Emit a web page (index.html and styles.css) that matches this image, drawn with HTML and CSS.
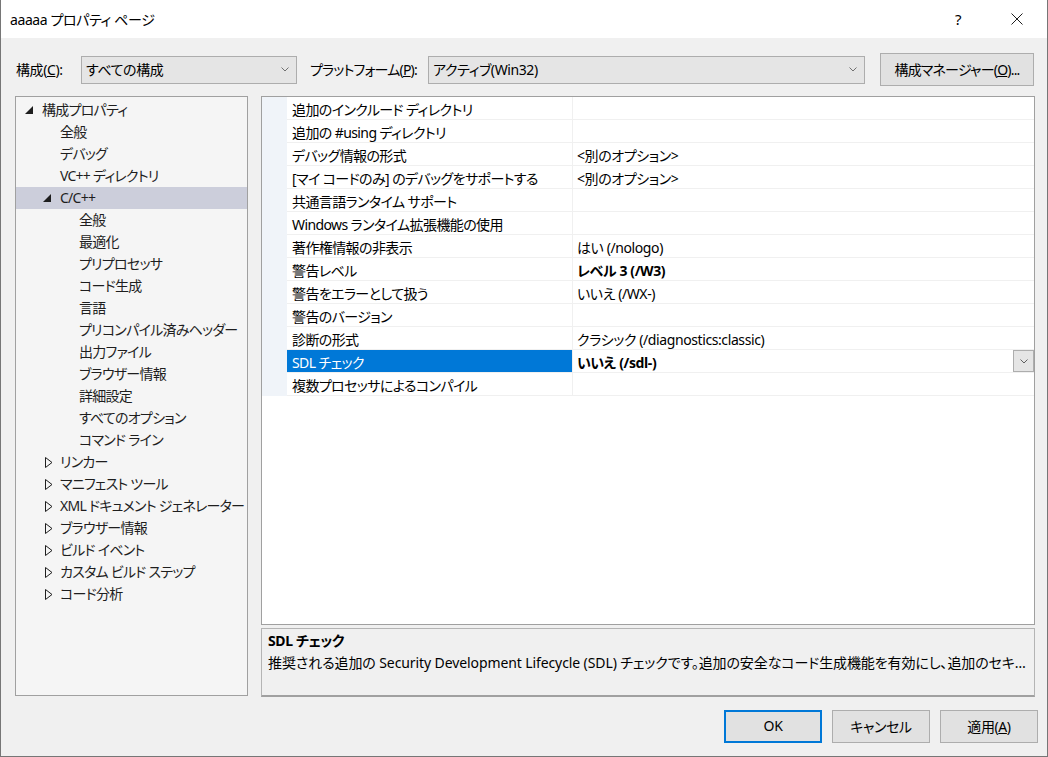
FILE: index.html
```html
<!DOCTYPE html>
<html lang="ja">
  <head>
    <meta charset="UTF-8" />
    <title>aaaaa プロパティ ページ</title>
    <link rel="stylesheet" href="styles.css">
  </head>
  <body>
    <div class="dialog">
      <div class="titlebar">
        <span class="title">aaaaa プロパティ ページ</span>
        <span class="help">?</span>
        <svg class="close" width="12" height="12" viewBox="0 0 12 12">
          <path d="M0.5 0.5 L11.5 11.5 M11.5 0.5 L0.5 11.5" stroke="#1e1e1e" stroke-width="1" fill="none" />
        </svg>
      </div>

      <div class="toolbar">
        <label class="field-label config-label">構成(<u>C</u>):</label>
        <div class="combo config-combo">
          <span>すべての構成</span>
          <svg class="chevron" width="8" height="5" viewBox="0 0 8 5"><path d="M0.5 0.5 L4 4 L7.5 0.5" stroke="#707070" fill="none" /></svg>
        </div>
        <label class="field-label platform-label">プラットフォーム(<u>P</u>):</label>
        <div class="combo platform-combo">
          <span>アクティブ(Win32)</span>
          <svg class="chevron" width="8" height="5" viewBox="0 0 8 5"><path d="M0.5 0.5 L4 4 L7.5 0.5" stroke="#707070" fill="none" /></svg>
        </div>
        <button class="btn manager-btn">構成マネージャー(<u>O</u>)...</button>
      </div>

      <div class="content">
        <ul class="tree">
          <li class="node lvl0"><span class="exp"><svg width="8" height="8" viewBox="0 0 8 8"><polygon points="8,0 8,8 0,8" fill="#1e1e1e" /></svg></span>構成プロパティ</li>
          <li class="node lvl1"><span class="exp"></span>全般</li>
          <li class="node lvl1"><span class="exp"></span>デバッグ</li>
          <li class="node lvl1"><span class="exp"></span>VC++ ディレクトリ</li>
          <li class="node lvl1 active"><span class="exp"><svg width="8" height="8" viewBox="0 0 8 8"><polygon points="8,0 8,8 0,8" fill="#1e1e1e" /></svg></span>C/C++</li>
          <li class="node lvl2"><span class="exp"></span>全般</li>
          <li class="node lvl2"><span class="exp"></span>最適化</li>
          <li class="node lvl2"><span class="exp"></span>プリプロセッサ</li>
          <li class="node lvl2"><span class="exp"></span>コード生成</li>
          <li class="node lvl2"><span class="exp"></span>言語</li>
          <li class="node lvl2"><span class="exp"></span>プリコンパイル済みヘッダー</li>
          <li class="node lvl2"><span class="exp"></span>出力ファイル</li>
          <li class="node lvl2"><span class="exp"></span>ブラウザー情報</li>
          <li class="node lvl2"><span class="exp"></span>詳細設定</li>
          <li class="node lvl2"><span class="exp"></span>すべてのオプション</li>
          <li class="node lvl2"><span class="exp"></span>コマンド ライン</li>
          <li class="node lvl1"><span class="exp collapsed"><svg width="8" height="11" viewBox="0 0 8 11"><polygon points="0.5,0.5 7,5.5 0.5,10.5" fill="none" stroke="#1e1e1e" /></svg></span>リンカー</li>
          <li class="node lvl1"><span class="exp collapsed"><svg width="8" height="11" viewBox="0 0 8 11"><polygon points="0.5,0.5 7,5.5 0.5,10.5" fill="none" stroke="#1e1e1e" /></svg></span>マニフェスト ツール</li>
          <li class="node lvl1"><span class="exp collapsed"><svg width="8" height="11" viewBox="0 0 8 11"><polygon points="0.5,0.5 7,5.5 0.5,10.5" fill="none" stroke="#1e1e1e" /></svg></span>XML ドキュメント ジェネレーター</li>
          <li class="node lvl1"><span class="exp collapsed"><svg width="8" height="11" viewBox="0 0 8 11"><polygon points="0.5,0.5 7,5.5 0.5,10.5" fill="none" stroke="#1e1e1e" /></svg></span>ブラウザー情報</li>
          <li class="node lvl1"><span class="exp collapsed"><svg width="8" height="11" viewBox="0 0 8 11"><polygon points="0.5,0.5 7,5.5 0.5,10.5" fill="none" stroke="#1e1e1e" /></svg></span>ビルド イベント</li>
          <li class="node lvl1"><span class="exp collapsed"><svg width="8" height="11" viewBox="0 0 8 11"><polygon points="0.5,0.5 7,5.5 0.5,10.5" fill="none" stroke="#1e1e1e" /></svg></span>カスタム ビルド ステップ</li>
          <li class="node lvl1"><span class="exp collapsed"><svg width="8" height="11" viewBox="0 0 8 11"><polygon points="0.5,0.5 7,5.5 0.5,10.5" fill="none" stroke="#1e1e1e" /></svg></span>コード分析</li>
        </ul>

        <div class="right-pane">
          <div class="props">
            <div class="prop-row"><div class="gutter"></div><div class="name">追加のインクルード ディレクトリ</div><div class="value"></div></div>
            <div class="prop-row"><div class="gutter"></div><div class="name">追加の #using ディレクトリ</div><div class="value"></div></div>
            <div class="prop-row"><div class="gutter"></div><div class="name">デバッグ情報の形式</div><div class="value">&lt;別のオプション&gt;</div></div>
            <div class="prop-row"><div class="gutter"></div><div class="name">[マイ コードのみ] のデバッグをサポートする</div><div class="value">&lt;別のオプション&gt;</div></div>
            <div class="prop-row"><div class="gutter"></div><div class="name">共通言語ランタイム サポート</div><div class="value"></div></div>
            <div class="prop-row"><div class="gutter"></div><div class="name">Windows ランタイム拡張機能の使用</div><div class="value"></div></div>
            <div class="prop-row"><div class="gutter"></div><div class="name">著作権情報の非表示</div><div class="value">はい (/nologo)</div></div>
            <div class="prop-row"><div class="gutter"></div><div class="name">警告レベル</div><div class="value bold">レベル 3 (/W3)</div></div>
            <div class="prop-row"><div class="gutter"></div><div class="name">警告をエラーとして扱う</div><div class="value">いいえ (/WX-)</div></div>
            <div class="prop-row"><div class="gutter"></div><div class="name">警告のバージョン</div><div class="value"></div></div>
            <div class="prop-row"><div class="gutter"></div><div class="name">診断の形式</div><div class="value">クラシック (/diagnostics:classic)</div></div>
            <div class="prop-row selected">
              <div class="gutter"></div>
              <div class="name">SDL チェック</div>
              <div class="value bold">
                <span>いいえ (/sdl-)</span>
                <span class="drop-btn"><svg width="8" height="5" viewBox="0 0 8 5"><path d="M0.5 0.5 L4 4 L7.5 0.5" stroke="#606060" fill="none" /></svg></span>
              </div>
            </div>
            <div class="prop-row"><div class="gutter"></div><div class="name">複数プロセッサによるコンパイル</div><div class="value"></div></div>
          </div>

          <div class="desc">
            <div class="desc-title">SDL チェック</div>
            <div class="desc-text">推奨される追加の Security Development Lifecycle (SDL) チェックです。追加の安全なコード生成機能を有効にし、追加のセキュリティ関連の警告をエラーとして有効にします。</div>
          </div>
        </div>
      </div>

      <div class="footer">
        <button class="btn default-btn">OK</button>
        <button class="btn">キャンセル</button>
        <button class="btn">適用(<u>A</u>)</button>
      </div>
    </div>
  </body>
</html>
```

FILE: styles.css
```css
* {
  box-sizing: border-box;
}
html,
body {
  margin: 0;
  padding: 0;
}
body {
  font-family: "Noto Sans", "Noto Sans CJK JP", sans-serif;
  font-size: 14px;
  font-feature-settings: "palt";
  letter-spacing: -0.4px;
  color: #1e1e1e;
  background: #f0f0f0;
}
.dialog {
  width: 1048px;
  height: 757px;
  background: #f0f0f0;
  border: 1px solid #767676;
  border-top: none;
  display: flex;
  flex-direction: column;
}

/* title bar */
.titlebar {
  height: 38px;
  background: #fff;
  display: flex;
  align-items: center;
  padding-left: 9px;
  color: #000;
}
.title {
  font-size: 14px;
  flex: 1;
}
.help {
  font-size: 15px;
  margin-right: 50px;
}
.close {
  margin-right: 24px;
}

/* configuration row */
.toolbar {
  display: flex;
  align-items: center;
  height: 33px;
  margin-top: 15px;
  padding-left: 15px;
  color: #000;
}
.field-label {
  white-space: nowrap;
  padding-bottom: 2px;
}
.config-label {
  width: 65px;
}
.platform-label {
  width: 118px;
  margin-left: 13px;
  letter-spacing: -0.8px;
}
.combo {
  height: 28px;
  background: #e5e5e5;
  border: 1px solid #adadad;
  display: flex;
  align-items: center;
  justify-content: space-between;
  padding: 0 7px 2px 4px;
  color: #000;
}
.combo .chevron {
  margin-top: 2px;
}
.config-combo {
  width: 216px;
}
.platform-combo {
  width: 437px;
}
.btn {
  font: inherit;
  font-feature-settings: "palt";
  letter-spacing: -0.4px;
  color: #000;
  background: #e1e1e1;
  border: 1px solid #adadad;
  height: 33px;
  padding: 0 0 2px;
}
.manager-btn {
  width: 154px;
  margin-left: 15px;
  letter-spacing: -0.8px;
}

/* main area */
.content {
  display: flex;
  margin-top: 10px;
  padding-left: 14px;
  gap: 13px;
}
.tree {
  list-style: none;
  margin: 0;
  padding: 2px 0 0;
  width: 233px;
  height: 600px;
  background: #f5f5f5;
  border: 1px solid #a0a0a0;
}
.node {
  height: 22px;
  line-height: 22px;
  display: flex;
  align-items: center;
  white-space: nowrap;
  letter-spacing: -0.75px;
}
.node.active {
  background: #cccedb;
}
.exp {
  width: 18px;
  flex: none;
  display: flex;
  align-items: center;
  padding-left: 1px;
}
.exp.collapsed {
  padding-left: 3px;
}
.lvl0 {
  padding-left: 8px;
}
.lvl1 {
  padding-left: 26px;
}
.lvl2 {
  padding-left: 45px;
}

.right-pane {
  width: 774px;
  display: flex;
  flex-direction: column;
  gap: 3px;
}
.props {
  height: 529px;
  background: #fff;
  border: 1px solid #a0a0a0;
  color: #000;
}
.prop-row {
  display: grid;
  grid-template-columns: 25px 285px 1fr;
  height: 23px;
}
.gutter {
  background: #f0f4f9;
}
.name,
.value {
  padding-top: 3px;
  line-height: 19px;
  border-bottom: 1px solid #f0f0f0;
  white-space: nowrap;
  overflow: hidden;
}
.name {
  padding-left: 5px;
  letter-spacing: -0.6px;
}
.value {
  padding-left: 4px;
  border-left: 1px solid #f0f0f0;
}
.value.bold {
  font-weight: bold;
}
.selected .name {
  background: #0078d7;
  color: #fff;
}
.selected .value {
  display: flex;
  justify-content: space-between;
  align-items: flex-start;
}
.drop-btn {
  width: 21px;
  height: 22px;
  margin-top: -3px;
  background: #e5e5e5;
  border: 1px solid #adadad;
  display: flex;
  align-items: center;
  justify-content: center;
}

.desc {
  height: 69px;
  border: 1px solid #b4b4b4;
  border-bottom: 2px solid #a0a0a0;
  background: #f0f0f0;
  padding: 2px 6px 0;
  color: #000;
}
.desc-title {
  font-weight: bold;
  line-height: 20px;
}
.desc-text {
  line-height: 23px;
  letter-spacing: -0.1px;
  white-space: nowrap;
  overflow: hidden;
  text-overflow: ellipsis;
}

/* dialog buttons */
.footer {
  display: flex;
  justify-content: flex-end;
  gap: 10px;
  margin-top: 13px;
  padding-right: 9px;
}
.footer .btn {
  width: 98px;
}
.default-btn {
  border: 2px solid #0078d7;
}
```
